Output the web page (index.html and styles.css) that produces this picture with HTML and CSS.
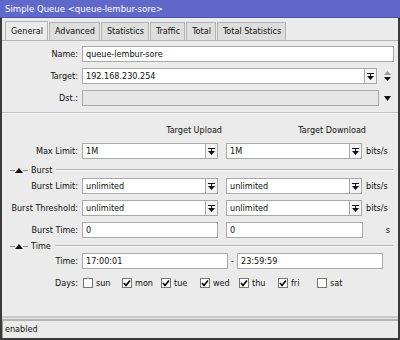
FILE: index.html
```html
<!DOCTYPE html>
<html>
<head>
<meta charset="utf-8">
<link rel="stylesheet" href="styles.css">
</head>
<body>
<div class="win">
  <div class="title">Simple Queue &lt;queue-lembur-sore&gt;</div>
  <div class="tabs">
    <div class="tab active">General</div>
    <div class="tab">Advanced</div>
    <div class="tab">Statistics</div>
    <div class="tab">Traffic</div>
    <div class="tab">Total</div>
    <div class="tab">Total Statistics</div>
  </div>
  <div class="panel">
    <div class="row r-name">
      <div class="lbl">Name:</div>
      <div class="field grow"><span class="val">queue-lembur-sore</span></div>
    </div>
    <div class="row r-gap">
      <div class="lbl">Target:</div>
      <div class="field grow"><span class="val">192.168.230.254</span></div>
      <div class="xbtn"><svg class="dd" viewBox="0 0 7 7" width="7" height="7"><rect x="0" y="0" width="7" height="1"/><rect x="3" y="1" width="1" height="3"/><polygon points="0,3 7,3 3.5,7"/></svg></div>
      <div class="trail t-target"><svg viewBox="0 0 7 11" width="7" height="11"><polygon points="0,4 7,4 3.5,0" fill="#9a9a9a"/><polygon points="0,6 7,6 3.5,10" fill="#111"/></svg></div>
    </div>
    <div class="row r-gap">
      <div class="lbl">Dst.:</div>
      <div class="field grow disabled"></div>
      <div class="trail t-dst"><svg viewBox="0 0 7 5" width="7" height="5"><polygon points="0,0 7,0 3.5,5" fill="#111"/></svg></div>
    </div>
    <div class="sep"></div>
    <div class="hrow">
      <div class="hcell h1">Target Upload</div>
      <div class="hcell h2">Target Download</div>
    </div>
    <div class="row r-max">
      <div class="lbl">Max Limit:</div>
      <div class="field half"><span class="val">1M</span><span class="ibtn"><svg viewBox="0 0 7 7" width="7" height="7"><rect x="0" y="0" width="7" height="1"/><rect x="3" y="1" width="1" height="3"/><polygon points="0,3 7,3 3.5,7"/></svg></span></div>
      <div class="field half f2"><span class="val">1M</span><span class="ibtn"><svg viewBox="0 0 7 7" width="7" height="7"><rect x="0" y="0" width="7" height="1"/><rect x="3" y="1" width="1" height="3"/><polygon points="0,3 7,3 3.5,7"/></svg></span></div>
      <div class="unit">bits/s</div>
    </div>
    <div class="sect s-burst">
      <span class="dash"></span><svg class="tri" viewBox="0 0 8 5" width="8" height="5"><polygon points="0,5 8,5 4,0"/></svg><span class="dash"></span><span class="stxt">Burst</span><span class="line"></span>
    </div>
    <div class="row r-bl">
      <div class="lbl">Burst Limit:</div>
      <div class="field half"><span class="val">unlimited</span><span class="ibtn"><svg viewBox="0 0 7 7" width="7" height="7"><rect x="0" y="0" width="7" height="1"/><rect x="3" y="1" width="1" height="3"/><polygon points="0,3 7,3 3.5,7"/></svg></span></div>
      <div class="field half f2"><span class="val">unlimited</span><span class="ibtn"><svg viewBox="0 0 7 7" width="7" height="7"><rect x="0" y="0" width="7" height="1"/><rect x="3" y="1" width="1" height="3"/><polygon points="0,3 7,3 3.5,7"/></svg></span></div>
      <div class="unit">bits/s</div>
    </div>
    <div class="row r-gap">
      <div class="lbl">Burst Threshold:</div>
      <div class="field half"><span class="val">unlimited</span><span class="ibtn"><svg viewBox="0 0 7 7" width="7" height="7"><rect x="0" y="0" width="7" height="1"/><rect x="3" y="1" width="1" height="3"/><polygon points="0,3 7,3 3.5,7"/></svg></span></div>
      <div class="field half f2"><span class="val">unlimited</span><span class="ibtn"><svg viewBox="0 0 7 7" width="7" height="7"><rect x="0" y="0" width="7" height="1"/><rect x="3" y="1" width="1" height="3"/><polygon points="0,3 7,3 3.5,7"/></svg></span></div>
      <div class="unit">bits/s</div>
    </div>
    <div class="row r-gap">
      <div class="lbl">Burst Time:</div>
      <div class="field half"><span class="val">0</span></div>
      <div class="field half f2 wide1"><span class="val">0</span></div>
      <div class="unit u-s">s</div>
    </div>
    <div class="sect s-time">
      <span class="dash"></span><svg class="tri" viewBox="0 0 8 5" width="8" height="5"><polygon points="0,5 8,5 4,0"/></svg><span class="dash"></span><span class="stxt">Time</span><span class="line"></span>
    </div>
    <div class="row r-time">
      <div class="lbl">Time:</div>
      <div class="field tf"><span class="val">17:00:01</span></div>
      <div class="tdash">-</div>
      <div class="field tf"><span class="val">23:59:59</span></div>
    </div>
    <div class="row r-days">
      <div class="lbl">Days:</div>
      <div class="days">
        <span class="day"><span class="cb"></span>sun</span>
        <span class="day"><span class="cb on"><svg viewBox="0 0 8 8" width="8" height="8"><polyline points="1,4 3,6.5 7,1.5" fill="none" stroke="#000" stroke-width="1.6"/></svg></span>mon</span>
        <span class="day"><span class="cb on"><svg viewBox="0 0 8 8" width="8" height="8"><polyline points="1,4 3,6.5 7,1.5" fill="none" stroke="#000" stroke-width="1.6"/></svg></span>tue</span>
        <span class="day"><span class="cb on"><svg viewBox="0 0 8 8" width="8" height="8"><polyline points="1,4 3,6.5 7,1.5" fill="none" stroke="#000" stroke-width="1.6"/></svg></span>wed</span>
        <span class="day"><span class="cb on"><svg viewBox="0 0 8 8" width="8" height="8"><polyline points="1,4 3,6.5 7,1.5" fill="none" stroke="#000" stroke-width="1.6"/></svg></span>thu</span>
        <span class="day"><span class="cb on"><svg viewBox="0 0 8 8" width="8" height="8"><polyline points="1,4 3,6.5 7,1.5" fill="none" stroke="#000" stroke-width="1.6"/></svg></span>fri</span>
        <span class="day"><span class="cb"></span>sat</span>
      </div>
    </div>
  </div>
  <div class="ssep"></div>
  <div class="status">enabled</div>
</div>
</body>
</html>
```
FILE: styles.css
```css
* { box-sizing: border-box; }
html, body { margin: 0; padding: 0; }
body {
  width: 400px;
  height: 340px;
  overflow: hidden;
  font-family: "DejaVu Sans Condensed", "DejaVu Sans", "Liberation Sans", sans-serif;
  font-size: 9px;
  color: #111;
  background: #ebebeb;
}
.win {
  width: 400px;
  height: 340px;
  display: flex;
  flex-direction: column;
  background: #ebebeb;
  border-left: 2px solid #3a3a3a;
  border-right: 2px solid #3a3a3a;
  border-bottom: 2px solid #3a3a3a;
}
.title {
  height: 18px;
  margin: 0 -2px;
  padding-left: 5px;
  line-height: 18px;
  background: #6068c9;
  color: #fff;
  font-size: 9.5px;
  border-bottom: 1px solid #4a51a8;
}
.tabs {
  display: flex;
  margin-top: 3px;
  padding-left: 3px;
  height: 19px;
  position: relative;
  z-index: 1;
}
.tab {
  height: 18px;
  margin-top: 1px;
  padding: 0 4px 0 5px;
  line-height: 17px;
  border: 1px solid #b3b3b3;
  border-bottom: none;
  background: #dedede;
  margin-right: 1px;
}
.tab.active {
  background: #ebebeb;
  height: 19px;
  margin-top: 0;
  line-height: 19px;
}
.panel {
  flex: 1;
  border-top: 1px solid #b3b3b3;
  padding: 5px 4px 0 0;
  display: flex;
  flex-direction: column;
}
.row {
  display: flex;
  align-items: center;
  height: 16px;
  flex-shrink: 0;
}
.r-gap { margin-top: 6px; }
.lbl {
  width: 76px;
  margin-right: 4px;
  text-align: right;
  white-space: nowrap;
}
.field {
  height: 16px;
  border: 1px solid #a9a9a9;
  background: #fff;
  display: flex;
  align-items: center;
  overflow: hidden;
}
.field.grow { flex: 1; }
.field.disabled { background: #e6e6e6; }
.val { flex: 1; padding-left: 3px; white-space: nowrap; }
.xbtn {
  width: 12px;
  height: 16px;
  border: 1px solid #a9a9a9;
  border-left: none;
  background: #f4f4f4;
  display: flex;
  align-items: center;
  justify-content: center;
}
.ibtn {
  width: 12px;
  height: 14px;
  border-left: 1px solid #a9a9a9;
  background: #f4f4f4;
  display: flex;
  align-items: center;
  justify-content: center;
}
svg { display: block; fill: #111; }
.trail {
  display: flex;
  align-items: center;
  height: 16px;
}
.t-target { width: 17px; padding-left: 7px; }
.t-dst { width: 15px; padding-left: 5px; }
.sep {
  margin-top: 6px;
  height: 2px;
  border-top: 1px solid #c2c2c2;
  border-bottom: 1px solid #fafafa;
  margin-right: -4px;
  flex-shrink: 0;
}
.hrow {
  display: flex;
  margin-top: 10px;
  height: 12px;
  line-height: 12px;
  padding-left: 80px;
  flex-shrink: 0;
}
.hcell { text-align: right; white-space: nowrap; }
.h1 { width: 140px; }
.h2 { width: 144px; }
.r-max { margin-top: 7px; }
.field.half { width: 136px; }
.field.f2 { margin-left: 8px; }
.field.wide1 { width: 137px; }
.unit { flex: 1; padding-left: 4px; white-space: nowrap; }
.u-s { text-align: right; padding-right: 4px; }
.sect {
  display: flex;
  align-items: center;
  height: 12px;
  margin-top: 5px;
  padding-left: 8px;
  margin-right: 1px;
  flex-shrink: 0;
}
.s-time { margin-top: 2px; }
.dash { width: 5px; height: 1px; background: #8c8c8c; }
.tri { margin: 0 0; }
.stxt { padding: 0 4px 0 3px; line-height: 12px; }
.line { flex: 1; height: 2px; border-top: 1px solid #b5b5b5; border-bottom: 1px solid #fafafa; }
.r-bl { margin-top: 2px; }
.r-time { margin-top: 1px; }
.field.tf { width: 146px; }
.tdash { width: 9px; text-align: center; }
.r-days { margin-top: 8px; height: 12px; }
.days { display: flex; padding-left: 1px; }
.day {
  display: flex;
  align-items: center;
  width: 39px;
  white-space: nowrap;
}
.cb {
  width: 10px;
  height: 10px;
  border: 1px solid #777;
  background: #fff;
  margin-right: 3px;
  display: flex;
  align-items: center;
  justify-content: center;
}
.ssep {
  height: 5px;
  border-top: 2px solid #c9c9c9;
  border-bottom: 2px solid #b3b3b3;
  background: #e2e2e2;
  flex-shrink: 0;
}
.status {
  height: 17px;
  line-height: 16px;
  padding-left: 2px;
  border-left: 1px solid #9a9a9a;
  background: #ebebeb;
  flex-shrink: 0;
}
```
